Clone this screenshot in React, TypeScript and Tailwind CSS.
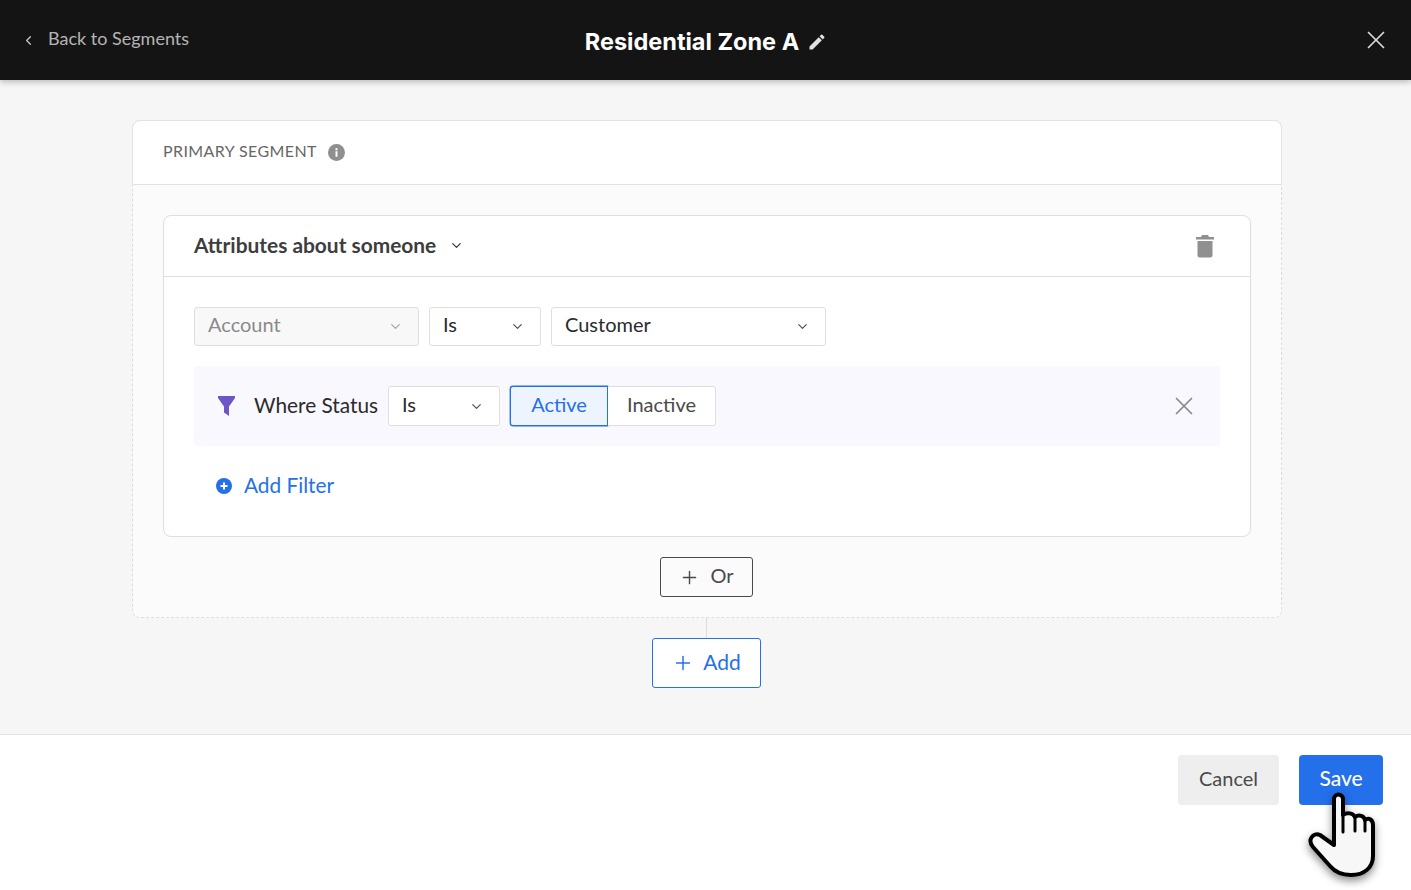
import { ChevronDown, ChevronLeft, Plus, X } from "lucide-react";
import { MdEdit } from "react-icons/md";

function Select({ label, width, height = "h-[39px]", disabled }: { label: string; width: string; height?: string; disabled?: boolean }) {
  return (
    <div
      className={`flex items-center justify-between rounded-[3px] border border-[#dfdfdf] pl-[13px] pr-[15px] text-[20px] ${height} ${width} ${
        disabled ? "bg-[#f8f8f8] text-[#8a8a8a]" : "bg-white text-[#2b2b2b]"
      }`}
    >
      <span className="pb-[5px]">{label}</span>
      <ChevronDown size={15} strokeWidth={2} className={disabled ? "text-[#a5a5a5]" : "text-[#555555]"} />
    </div>
  );
}

function Hand() {
  return (
    <svg
      viewBox="0 0 85 100"
      className="absolute left-[1300px] top-[785px] h-[100px] w-[85px] drop-shadow-[0_4px_4px_rgba(0,0,0,0.45)]"
    >
      <path
        d="M34 60V14A4.500 4.500 0 0 1 43 14V30C47 27 53 28 55 32C59 29 64 31 65 35C69 32 73 35 73 40V71C73 82 65 90 51 90C42 90 35 87 30 81L13 62C7 55 13 47 20 50Z"
        fill="#f7f7f7"
        stroke="#000"
        strokeWidth="4"
        strokeLinejoin="round"
      />
      <path d="M43 30V47M55 32V46M65 35V46" fill="none" stroke="#000" strokeWidth="3" strokeLinecap="round" />
    </svg>
  );
}

export default function App() {
  return (
    <div className="relative flex h-[890px] w-full flex-col overflow-hidden bg-white font-['Lato',sans-serif]">
      {/* Top bar */}
      <header className="relative z-10 grid h-20 shrink-0 grid-cols-[1fr_auto_1fr] items-center bg-[#141414] pl-[21px] pr-5 shadow-[0_2px_6px_rgba(0,0,0,0.25)]">
        <div className="flex items-center gap-[12px] text-[18px] text-[#b5b5b5]">
          <ChevronLeft size={15} strokeWidth={2} className="text-[#c8c8c8]" />
          <span className="pb-[3px]">Back to Segments</span>
        </div>
        <div className="flex items-center gap-2 pt-[2px]">
          <h1 className="mt-[2px] font-['Inter',sans-serif] text-[23.500px] font-bold leading-none text-white">Residential Zone A</h1>
          <MdEdit size={20} className="mt-[2px] text-[#e2e2e2]" />
        </div>
        <div className="flex justify-end">
          <X size={30} strokeWidth={1.4} className="text-[#d8d8d8]" />
        </div>
      </header>

      {/* Body */}
      <main className="flex flex-1 flex-col items-center bg-[#f6f6f6] pl-[3px] pt-10">
        <section className="w-[1150px] rounded-[8px] border border-dashed border-[#dddddd] bg-[#fbfbfb]">
          <div className="-mx-px -mt-px flex h-[65px] items-center gap-[11px] rounded-t-[8px] border border-[#e2e2e2] bg-white px-[30px]">
            <span className="pb-[3px] text-[16px] tracking-[0.4px] text-[#666666]">PRIMARY SEGMENT</span>
            <svg viewBox="0 0 17 17" className="h-[17px] w-[17px]">
              <circle cx="8.500" cy="8.500" r="8.500" fill="#8f8f8f" />
              <rect x="7.500" y="7.200" width="2" height="5.500" fill="#fff" />
              <rect x="7.500" y="4.200" width="2" height="2" fill="#fff" />
            </svg>
          </div>

          <div className="flex flex-col items-center px-[30px] pb-5 pt-[30px]">
            <div className="w-full rounded-[8px] border border-[#dedede] bg-white">
              <div className="flex h-[61px] items-center justify-between border-b border-[#dedede] pl-[30px] pr-[35px]">
                <div className="flex items-center gap-[13px]">
                  <span className="pb-[2px] text-[20.900px] font-bold text-[#3d3d3d]">Attributes about someone</span>
                  <ChevronDown size={15} strokeWidth={2} className="text-[#3d3d3d]" />
                </div>
                <svg viewBox="0 0 20 24" className="h-[24px] w-[20px]">
                  <path d="M7 1h6l1 2h5v2.500H1V3h5zM2.500 7h15v14a2.500 2.500 0 0 1-2.500 2.500H5A2.500 2.500 0 0 1 2.500 21z" fill="#909090" />
                </svg>
              </div>

              <div className="px-[30px] pb-[39px] pt-[30px]">
                <div className="flex gap-[10px]">
                  <Select label="Account" width="w-[225px]" disabled />
                  <Select label="Is" width="w-[112px]" />
                  <Select label="Customer" width="w-[275px]" />
                </div>

                <div className="mt-5 flex h-[80px] items-center rounded-[3px] bg-[#f8f8fe] pl-[24px] pr-[21px]">
                  <svg viewBox="0 0 17 20" className="h-[20px] w-[17px]">
                    <path d="M0 0H17V2L11 10.500V20L6 16.500V10.500L0 2Z" fill="#6e56c4" />
                  </svg>
                  <span className="ml-[19px] pb-[2px] text-[20.800px] text-[#2b2b2b]">Where Status</span>
                  <div className="ml-[10px]">
                    <Select label="Is" width="w-[112px]" height="h-[40px]" />
                  </div>
                  <div className="ml-[10px] flex h-[40px] text-[20px]">
                    <div className="flex w-[98px] items-center justify-center rounded-l-[3px] border border-[#2470eb] bg-[#eef4fd] pb-1 text-[#2470eb] shadow-[0_0_0_0.4px_#2470eb]">
                      Active
                    </div>
                    <div className="flex w-[108px] items-center justify-center rounded-r-[3px] border border-l-0 border-[#dfdfdf] bg-white pb-1 text-[#4a4a4a]">
                      Inactive
                    </div>
                  </div>
                  <X size={30} strokeWidth={1.4} className="ml-auto text-[#8a8a8a]" />
                </div>

                <div className="mt-[29px] flex h-[22px] items-center gap-[12px] pl-[22px] text-[20.800px] text-[#2470eb]">
                  <svg viewBox="0 0 16 16" className="h-4 w-4">
                    <circle cx="8" cy="8" r="8" fill="#2470eb" />
                    <path d="M8 4.500v7M4.500 8h7" stroke="#fff" strokeWidth="2" />
                  </svg>
                  <span className="pb-[3px]">Add Filter</span>
                </div>
              </div>
            </div>

            <button className="mr-px mt-5 flex h-10 w-[93px] items-center justify-center gap-[10px] rounded-[3px] border border-[#4a4a4a] text-[20px] text-[#4a4a4a]">
              <Plus size={21} strokeWidth={1.6} />
              <span className="pb-1">Or</span>
            </button>
          </div>
        </section>

        <div className="mr-px h-5 w-px bg-[#dcdcdc]" />
        <button className="mr-px flex h-[50px] w-[109px] items-center justify-center gap-[9px] rounded-[3px] border border-[#2470eb] bg-white text-[21px] text-[#2470eb]">
          <Plus size={22} strokeWidth={1.6} />
          <span className="pb-[3px]">Add</span>
        </button>
      </main>

      {/* Footer */}
      <footer className="flex h-[156px] shrink-0 items-start justify-end gap-5 border-t border-[#e2e2e2] bg-white pr-7 pt-5">
        <button className="flex h-[50px] w-[101px] items-center justify-center rounded-[4px] bg-[#eeeeee] pb-1 text-[20px] text-[#4a4a4a]">
          Cancel
        </button>
        <button className="flex h-[50px] w-[84px] items-center justify-center rounded-[4px] bg-[#2470eb] pb-1 text-[21px] font-medium text-white">
          Save
        </button>
      </footer>

      <Hand />
    </div>
  );
}
